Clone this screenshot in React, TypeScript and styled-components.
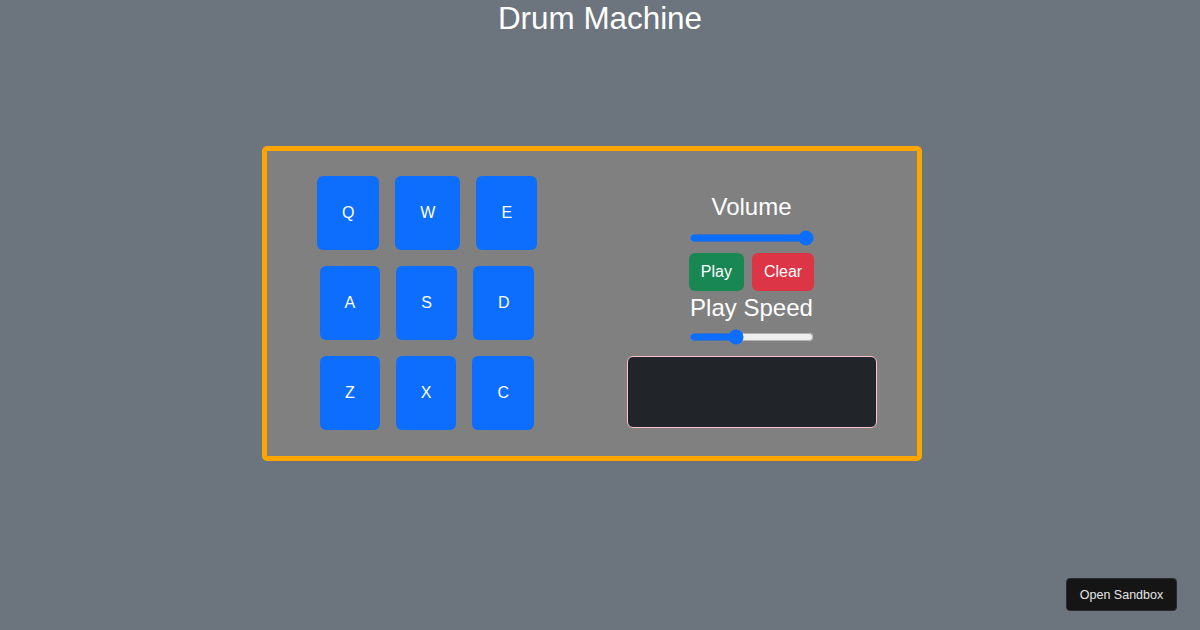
import styled, { createGlobalStyle } from 'styled-components';

const GlobalStyle = createGlobalStyle`
  html, body {
    margin: 0;
    padding: 0;
    background: #6c757d;
    font-family: 'Liberation Sans', Arial, sans-serif;
    color: #ffffff;
  }
  * { box-sizing: border-box; }
`;

const Title = styled.h1`
  margin: 0;
  height: 38px;
  font-size: 31.4px;
  font-weight: 400;
  line-height: 38px;
  text-align: center;
`;

const Machine = styled.div`
  width: 660px;
  height: 315px;
  margin: 108px 0 0 262px;
  border: 5px solid #ffa500;
  border-radius: 5px;
  background: #808080;
  display: grid;
  grid-template-columns: 320px 330px;
`;

const PadGrid = styled.div`
  padding-top: 17px;
  display: flex;
  flex-direction: column;
`;

const PadRow = styled.div`
  display: flex;
  justify-content: center;
`;

const Pad = styled.button`
  margin: 8px;
  padding: 25px;
  border: none;
  border-radius: 6px;
  background: #0d6efd;
  color: #ffffff;
  font-family: inherit;
  font-size: 16px;
  line-height: 24px;
  cursor: pointer;
`;

const Controls = styled.div`
  padding: 42px 1px 0 0;
  display: flex;
  flex-direction: column;
  align-items: center;
`;

const Label = styled.div`
  font-size: 24px;
  line-height: 28.8px;
`;

const Range = styled.input<{ $top: number; $bottom: number }>`
  width: 125px;
  height: 16px;
  margin: ${p => p.$top}px 0 ${p => p.$bottom}px;
  accent-color: #0d6efd;
`;

const ButtonRow = styled.div`
  display: flex;
  gap: 8px;
  margin-bottom: 3px;
`;

const ActionButton = styled.button<{ $tone: 'success' | 'danger' }>`
  padding: 6px 12px;
  border: none;
  border-radius: 6px;
  background: ${p => (p.$tone === 'success' ? '#198754' : '#dc3545')};
  color: #ffffff;
  font-family: inherit;
  font-size: 16px;
  line-height: 26px;
  cursor: pointer;
`;

const Display = styled.div`
  width: 250px;
  height: 72px;
  background: #212529;
  border: 1px solid #ffc0cb;
  border-radius: 6px;
`;

const SandboxButton = styled.button`
  position: fixed;
  right: 23px;
  bottom: 19px;
  width: 111px;
  height: 33px;
  border: 1px solid #2a2a2a;
  border-radius: 4px;
  background: #151515;
  color: #e6e6e6;
  font-family: 'Liberation Sans', Arial, sans-serif;
  font-size: 12.5px;
`;

const rows = [
  ['Q', 'W', 'E'],
  ['A', 'S', 'D'],
  ['Z', 'X', 'C'],
];

export default function App() {
  return (
    <>
      <GlobalStyle />
      <Title>Drum Machine</Title>
      <Machine>
        <PadGrid>
          {rows.map((row, i) => (
            <PadRow key={i}>
              {row.map(k => (
                <Pad key={k}>{k}</Pad>
              ))}
            </PadRow>
          ))}
        </PadGrid>
        <Controls>
          <Label>Volume</Label>
          <Range type="range" min={0} max={1} step={0.01} defaultValue={1} $top={8} $bottom={7} />
          <ButtonRow>
            <ActionButton $tone="success">Play</ActionButton>
            <ActionButton $tone="danger">Clear</ActionButton>
          </ButtonRow>
          <Label>Play Speed</Label>
          <Range type="range" min={0} max={100} defaultValue={36} $top={6} $bottom={11} />
          <Display />
        </Controls>
      </Machine>
      <SandboxButton>Open Sandbox</SandboxButton>
    </>
  );
}
